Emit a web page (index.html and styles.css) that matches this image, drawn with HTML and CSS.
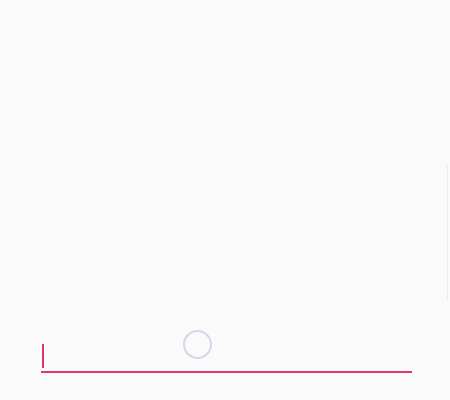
FILE: index.html
```html
<!DOCTYPE html>
<html lang="en">
<head>
<meta charset="utf-8">
<title>Input</title>
<link rel="stylesheet" href="styles.css">
</head>
<body>
<main class="screen">
  <div class="field">
    <span class="caret"></span>
    <span class="handle"></span>
  </div>
  <div class="scroll-indicator"></div>
</main>
</body>
</html>
```
FILE: styles.css
```css
html, body {
  margin: 0;
  padding: 0;
  background: #fafafa;
  font-family: "Roboto", "Liberation Sans", sans-serif;
}

.screen {
  position: relative;
  box-sizing: border-box;
  width: 450px;
  height: 400px;
  display: flex;
  flex-direction: column;
  justify-content: flex-end;
  padding: 0 38px 27px 41px;
}

.field {
  position: relative;
  display: flex;
  align-items: flex-start;
  height: 24px;
  padding: 0 0 3px 1px;
  border-bottom: 2px solid #e2356f;
}

.caret {
  display: block;
  width: 2px;
  height: 24px;
  background: #e2356f;
}

.handle {
  position: absolute;
  left: 142px;
  top: -14px;
  box-sizing: border-box;
  width: 29px;
  height: 29px;
  border: 2px solid #d6d6e6;
  border-radius: 50%;
  background: #fafafa;
}

.scroll-indicator {
  position: absolute;
  right: 2px;
  top: 165px;
  width: 1px;
  height: 135px;
  background: #ececec;
}
```
